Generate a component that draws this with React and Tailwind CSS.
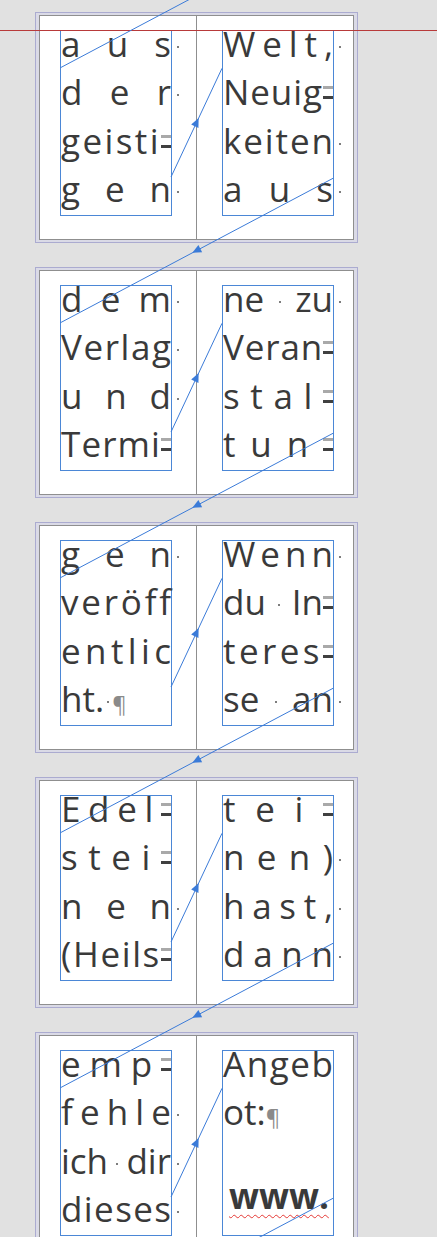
import React from 'react';

// text frames per spread, left page then right page
// e: 'dot' = space marker after the line, 'pil' lines are set ragged
const spreads = [
  {
    left: [{ t: 'aus', e: 'dot' }, { t: 'der', e: 'dot' }, { t: 'geisti=' }, { t: 'gen', e: 'dot' }],
    right: [{ t: 'Welt,', e: 'dot' }, { t: 'Neuig=' }, { t: 'keiten', e: 'dot' }, { t: 'aus', e: 'dot' }],
  },
  {
    left: [{ t: 'dem', e: 'dot' }, { t: 'Verlag', e: 'dot' }, { t: 'und', e: 'dot' }, { t: 'Termi=' }],
    right: [{ t: 'ne zu', e: 'dot' }, { t: 'Veran=' }, { t: 'stal=' }, { t: 'tun=' }],
  },
  {
    left: [{ t: 'gen', e: 'dot' }, { t: 'veröff' }, { t: 'entlic' }, { t: 'ht.', ragged: true, spaceDot: true, pil: true }],
    right: [{ t: 'Wenn', e: 'dot' }, { t: 'du In=' }, { t: 'teres=' }, { t: 'se an', e: 'dot' }],
  },
  {
    left: [{ t: 'Edel=' }, { t: 'stei=' }, { t: 'nen', e: 'dot' }, { t: '(Heils=' }],
    right: [{ t: 'tei=' }, { t: 'nen)', e: 'dot' }, { t: 'hast,', e: 'dot' }, { t: 'dann', e: 'dot' }],
  },
  {
    left: [{ t: 'emp=' }, { t: 'fehle', e: 'dot' }, { t: 'ich dir', e: 'dot' }, { t: 'dieses', e: 'dot' }],
    right: [{ t: 'Angeb' }, { t: 'ot:', ragged: true, pil: true }],
    url: true,
  },
];

const Dot = ({ className = '' }) => (
  <span className={`shrink-0 inline-block w-[2px] h-[2px] bg-[#7d7d7d] -translate-y-[9px] ${className}`} />
);

const Hyph = () => (
  <span className="shrink-0 inline-block w-[10px] h-[13px] border-t-[3px] border-b-[3px] border-t-[#a9a9a9] border-b-[#404040] -translate-y-[6px]" />
);

const Pilcrow = () => <span className="text-[22px] text-[#8a8a8a]">¶</span>;

const Word = ({ w }) => {
  const hy = w.endsWith('=');
  return (
    <span className="flex items-baseline">
      <span>{hy ? w.slice(0, -1) : w}</span>
      {hy && <Hyph />}
    </span>
  );
};

const Line = ({ line }) => {
  if (line.ragged) {
    return (
      <div className="flex items-baseline h-[48.3px] leading-[48.3px]">
        <span>{line.t}</span>
        {line.spaceDot && <Dot className="mx-[3px]" />}
        {line.pil && <Pilcrow />}
      </div>
    );
  }

  let tokens;
  if (line.t.includes(' ')) {
    const words = line.t.split(' ');
    tokens = [];
    words.forEach((w, i) => {
      if (i > 0) tokens.push(<Dot key={`d${i}`} />);
      tokens.push(<Word key={`w${i}`} w={w} />);
    });
  } else {
    tokens = Array.from(line.t).map((c, i) => (c === '=' ? <Hyph key={i} /> : <span key={i}>{c}</span>));
  }

  return (
    <div className="flex items-baseline h-[48.3px] leading-[48.3px]">
      <div className="flex w-full shrink-0 items-baseline justify-between">{tokens}</div>
      {line.e === 'dot' && <Dot className="ml-[6px]" />}
    </div>
  );
};

const Frame = ({ lines, side, url }) => (
  <div
    className={`mt-[14px] w-[112px] h-[186px] border border-[#4b87d6] ${side === 'left' ? 'ml-[20px]' : 'ml-[25px]'}`}
  >
    <div className="-mt-[11px]">
      {lines.map((l, i) => (
        <Line key={i} line={l} />
      ))}
      {url && (
        <div className="h-[48.3px] leading-[48.3px] -mt-[13px] pt-[48.3px] box-content pl-[6px]">
          <span className="font-bold underline decoration-wavy decoration-[#e53935] decoration-1 underline-offset-[5px]">
            www.
          </span>
        </div>
      )}
    </div>
  </div>
);

const Spread = ({ spread }) => (
  <div className="ml-[35px] w-[323px] h-[231px] shrink-0 border border-[#ababd0] bg-[#dadae6] px-[3px] py-[2px]">
    <div className="flex h-full border border-[#8f8f8f] bg-white">
      <div className="w-[156px]">
        <Frame lines={spread.left} side="left" />
      </div>
      <div className="w-px bg-[#8f8f8f]" />
      <div className="flex-1">
        <Frame lines={spread.right} side="right" url={spread.url} />
      </div>
    </div>
  </div>
);

// frame ports, relative to a spread's top
const L_IN = [60.5, 67.7];
const L_OUT = [171, 177];
const R_IN = [222, 68.3];
const R_OUT = [333, 178.3];
const PERIOD = 255;

const arrowPoints = (x1, y1, x2, y2) => {
  const mx = (x1 + x2) / 2;
  const my = (y1 + y2) / 2;
  const len = Math.hypot(x2 - x1, y2 - y1);
  const ux = (x2 - x1) / len;
  const uy = (y2 - y1) / len;
  const px = -uy;
  const py = ux;
  const tip = [mx + ux * 5, my + uy * 5];
  const b1 = [mx - ux * 4 + px * 4, my - uy * 4 + py * 4];
  const b2 = [mx - ux * 4 - px * 4, my - uy * 4 - py * 4];
  return [tip, b1, b2].map((p) => p.join(',')).join(' ');
};

const Threads = () => {
  const segs = [];
  for (let k = -1; k < spreads.length; k++) {
    const o = k * PERIOD;
    if (k >= 0) segs.push([L_OUT[0], L_OUT[1] + o, R_IN[0], R_IN[1] + o]);
    segs.push([R_OUT[0], R_OUT[1] + o, L_IN[0], L_IN[1] + o + PERIOD]);
  }
  return (
    <svg className="absolute inset-0 pointer-events-none" width="437" height="1237">
      <line x1="0" y1="30.5" x2="437" y2="30.5" stroke="#b83a3a" strokeWidth="1" />
      {segs.map(([x1, y1, x2, y2], i) => (
        <g key={i}>
          <line x1={x1} y1={y1} x2={x2} y2={y2} stroke="#3b7bd8" strokeWidth="1" />
          <polygon points={arrowPoints(x1, y1, x2, y2)} fill="#3b7bd8" />
        </g>
      ))}
    </svg>
  );
};

export default function App() {
  return (
    <div className="relative w-full h-[1237px] overflow-hidden bg-[#e1e1e1] font-['Open_Sans',sans-serif] text-[35px] text-[#3a3a3a]">
      <div className="flex flex-col gap-[24px] pt-[12px]">
        {spreads.map((s, i) => (
          <Spread key={i} spread={s} />
        ))}
      </div>
      <Threads />
    </div>
  );
}
